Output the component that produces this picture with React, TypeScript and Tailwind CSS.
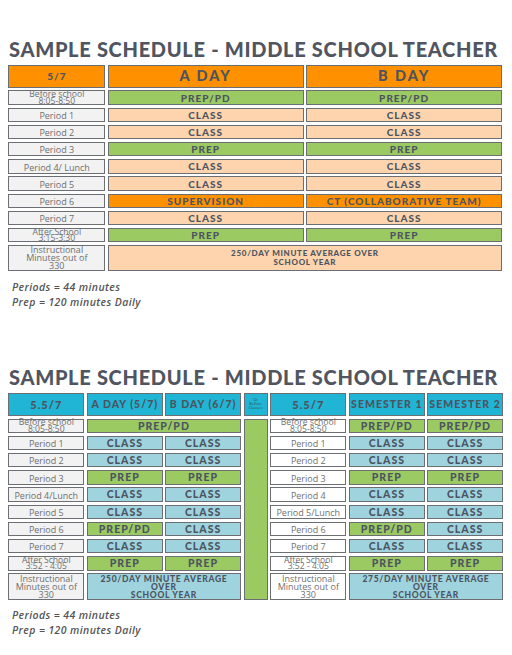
import React from "react";

const BORDER = "border border-[#6b6e72]";
const LABEL1 = `${BORDER} bg-[#f2f2f2]`;
const LABEL2 = `${BORDER} bg-white`;
const ORANGE = `${BORDER} bg-[#ff9100]`;
const PEACH = `${BORDER} bg-[#fed4ae]`;
const GREEN = `${BORDER} bg-[#9bca63]`;
const CYAN = `${BORDER} bg-[#20b5d5]`;
const BLUE = `${BORDER} bg-[#9fd4df]`;

function Cell({ cls, children, extra = "" }: { cls: string; children?: React.ReactNode; extra?: string }) {
  return (
    <div className={`${cls} ${extra} flex items-center justify-center text-center min-w-0`}>
      {children}
    </div>
  );
}

function Bold({ children, size = "text-[10px]" }: { children: React.ReactNode; size?: string }) {
  return (
    <span className={`font-['Lato'] font-black uppercase tracking-[1px] text-[#4d5461] leading-none whitespace-nowrap ${size}`}>
      {children}
    </span>
  );
}

function Label({ children }: { children: React.ReactNode }) {
  return (
    <span className="font-['Open_Sans'] text-[9px] text-[#6f6f6f] leading-none pt-[1.5px] whitespace-nowrap">
      {children}
    </span>
  );
}

function Label2({ a, b }: { a: string; b: string }) {
  return (
    <span className="font-['Open_Sans'] text-[8.6px] text-[#6f6f6f] leading-[6.6px] flex flex-col whitespace-nowrap">
      <span>{a}</span>
      <span>{b}</span>
    </span>
  );
}

function Label3() {
  return (
    <span className="font-['Open_Sans'] text-[9px] text-[#6f6f6f] leading-[7.8px] flex flex-col whitespace-nowrap">
      <span>Instructional</span>
      <span>Minutes out of</span>
      <span>330</span>
    </span>
  );
}

function Title() {
  return (
    <div className="h-[20px] leading-[20px] font-['Lato'] font-black text-[20px] text-[#50555f] tracking-[0.7px] whitespace-nowrap pl-[9px]">
      SAMPLE SCHEDULE - MIDDLE SCHOOL TEACHER
    </div>
  );
}

function Notes() {
  return (
    <div className="pl-[12px] font-['Open_Sans'] italic font-semibold text-[10.5px] leading-[14.5px] text-[#555555] tracking-[0.4px]">
      <div>Periods = 44 minutes</div>
      <div>Prep = 120 minutes Daily</div>
    </div>
  );
}

function Table1() {
  const rows: [React.ReactNode, string, string, string, string][] = [
    [<Label2 a="Before school" b="8:05-8:50" />, GREEN, "PREP/PD", GREEN, "PREP/PD"],
    [<Label>Period 1</Label>, PEACH, "CLASS", PEACH, "CLASS"],
    [<Label>Period 2</Label>, PEACH, "CLASS", PEACH, "CLASS"],
    [<Label>Period 3</Label>, GREEN, "PREP", GREEN, "PREP"],
    [<Label>Period 4/ Lunch</Label>, PEACH, "CLASS", PEACH, "CLASS"],
    [<Label>Period 5</Label>, PEACH, "CLASS", PEACH, "CLASS"],
    [<Label>Period 6</Label>, ORANGE, "SUPERVISION", ORANGE, "CT (COLLABORATIVE TEAM)"],
    [<Label>Period 7</Label>, PEACH, "CLASS", PEACH, "CLASS"],
    [<Label2 a="After School" b="3:15-3:30" />, GREEN, "PREP", GREEN, "PREP"],
  ];
  return (
    <div className="ml-[8.3px] grid grid-cols-[97px_196px_196px] grid-rows-[23px_repeat(9,14.5px)_25.7px] gap-x-[2.4px] gap-y-[2.7px]">
      <Cell cls={ORANGE}><Bold size="text-[10px]">5/7</Bold></Cell>
      <Cell cls={ORANGE}><Bold size="text-[14.5px] tracking-[2px]">A DAY</Bold></Cell>
      <Cell cls={ORANGE}><Bold size="text-[14.5px] tracking-[2px]">B DAY</Bold></Cell>
      {rows.map((r, i) => (
        <React.Fragment key={i}>
          <Cell cls={LABEL1}>{r[0]}</Cell>
          <Cell cls={r[1]}><Bold>{r[2]}</Bold></Cell>
          <Cell cls={r[3]}><Bold>{r[4]}</Bold></Cell>
        </React.Fragment>
      ))}
      <Cell cls={LABEL1}><Label3 /></Cell>
      <Cell cls={PEACH} extra="col-span-2 items-start pt-[3px]">
        <span className="font-['Lato'] font-black uppercase tracking-[0.7px] text-[#4d5461] text-[8px] leading-[8.5px] w-[170px]">
          250/DAY MINUTE AVERAGE OVER SCHOOL YEAR
        </span>
      </Cell>
    </div>
  );
}

function Table2() {
  type R = { l: React.ReactNode; r: React.ReactNode; a: [string, string] | null; b: [string, string] | null; s?: [string, string]; c: [string, string]; d: [string, string] };
  const C: [string, string] = [BLUE, "CLASS"];
  const P: [string, string] = [GREEN, "PREP"];
  const PD: [string, string] = [GREEN, "PREP/PD"];
  const rows: R[] = [
    { l: <Label2 a="Before school" b="8:05-8:50" />, r: <Label2 a="Before school" b="8:05-8:50" />, a: null, b: null, s: PD, c: PD, d: PD },
    { l: <Label>Period 1</Label>, r: <Label>Period 1</Label>, a: C, b: C, c: C, d: C },
    { l: <Label>Period 2</Label>, r: <Label>Period 2</Label>, a: C, b: C, c: C, d: C },
    { l: <Label>Period 3</Label>, r: <Label>Period 3</Label>, a: P, b: P, c: P, d: P },
    { l: <Label>Period 4/Lunch</Label>, r: <Label>Period 4</Label>, a: C, b: C, c: C, d: C },
    { l: <Label>Period 5</Label>, r: <Label>Period 5/Lunch</Label>, a: C, b: C, c: C, d: C },
    { l: <Label>Period 6</Label>, r: <Label>Period 6</Label>, a: PD, b: C, c: PD, d: C },
    { l: <Label>Period 7</Label>, r: <Label>Period 7</Label>, a: C, b: C, c: C, d: C },
    { l: <Label2 a="After School" b="3:52 - 4:05" />, r: <Label2 a="After School" b="3:52 - 4:05" />, a: P, b: P, c: P, d: P },
  ];
  const head = "text-[10.5px] tracking-[0.9px]";
  const span = (t: string) => (
    <span className="font-['Lato'] font-black uppercase tracking-[0.7px] text-[#4d5461] text-[8.5px] leading-[8px] flex flex-col pt-[1px]">
      <span>{t}</span>
      <span>OVER</span>
      <span>SCHOOL YEAR</span>
    </span>
  );
  return (
    <div className="ml-[8.3px] grid grid-cols-[76px_75.5px_75.5px_24px_76px_75.5px_75.5px] grid-rows-[23.3px_repeat(9,14.4px)_26.7px] gap-x-[2.75px] gap-y-[2.8px]">
      <Cell cls={CYAN}><Bold size="text-[11px] tracking-[1.2px]">5.5/7</Bold></Cell>
      <Cell cls={CYAN}><Bold size={head}>A DAY (5/7)</Bold></Cell>
      <Cell cls={CYAN}><Bold size={head}>B DAY (6/7)</Bold></Cell>
      <Cell cls={CYAN}>
        <span className="font-['Open_Sans'] text-[4px] leading-[4.2px] text-[#3f4650] flex flex-col">
          <span>Or</span>
          <span>Before</span>
          <span>Classes</span>
        </span>
      </Cell>
      <Cell cls={CYAN}><Bold size="text-[11px] tracking-[1.2px]">5.5/7</Bold></Cell>
      <Cell cls={CYAN}><Bold size={head}>SEMESTER 1</Bold></Cell>
      <Cell cls={CYAN}><Bold size={head}>SEMESTER 2</Bold></Cell>
      {rows.map((r, i) => (
        <React.Fragment key={i}>
          <Cell cls={LABEL1}>{r.l}</Cell>
          {r.s ? (
            <Cell cls={r.s[0]} extra="col-span-2"><Bold size="text-[10.5px]">{r.s[1]}</Bold></Cell>
          ) : (
            <>
              <Cell cls={r.a![0]}><Bold size="text-[10.5px]">{r.a![1]}</Bold></Cell>
              <Cell cls={r.b![0]}><Bold size="text-[10.5px]">{r.b![1]}</Bold></Cell>
            </>
          )}
          {i === 0 && <Cell cls={GREEN} extra="row-span-10" />}
          <Cell cls={LABEL2}>{r.r}</Cell>
          <Cell cls={r.c[0]}><Bold size="text-[10.5px]">{r.c[1]}</Bold></Cell>
          <Cell cls={r.d[0]}><Bold size="text-[10.5px]">{r.d[1]}</Bold></Cell>
        </React.Fragment>
      ))}
      <Cell cls={LABEL1}><Label3 /></Cell>
      <Cell cls={BLUE} extra="col-span-2">{span("250/DAY MINUTE AVERAGE")}</Cell>
      <Cell cls={LABEL2}><Label3 /></Cell>
      <Cell cls={BLUE} extra="col-span-2">{span("275/DAY MINUTE AVERAGE")}</Cell>
    </div>
  );
}

export default function App() {
  return (
    <div className="w-[512px] h-[655px] bg-white overflow-hidden">
      <div className="pt-[39px]">
        <Title />
      </div>
      <div className="mt-[5.7px]">
        <Table1 />
      </div>
      <div className="mt-[9.5px]">
        <Notes />
      </div>
      <div className="mt-[57.4px]">
        <Title />
      </div>
      <div className="mt-[5.9px]">
        <Table2 />
      </div>
      <div className="mt-[8px]">
        <Notes />
      </div>
    </div>
  );
}
